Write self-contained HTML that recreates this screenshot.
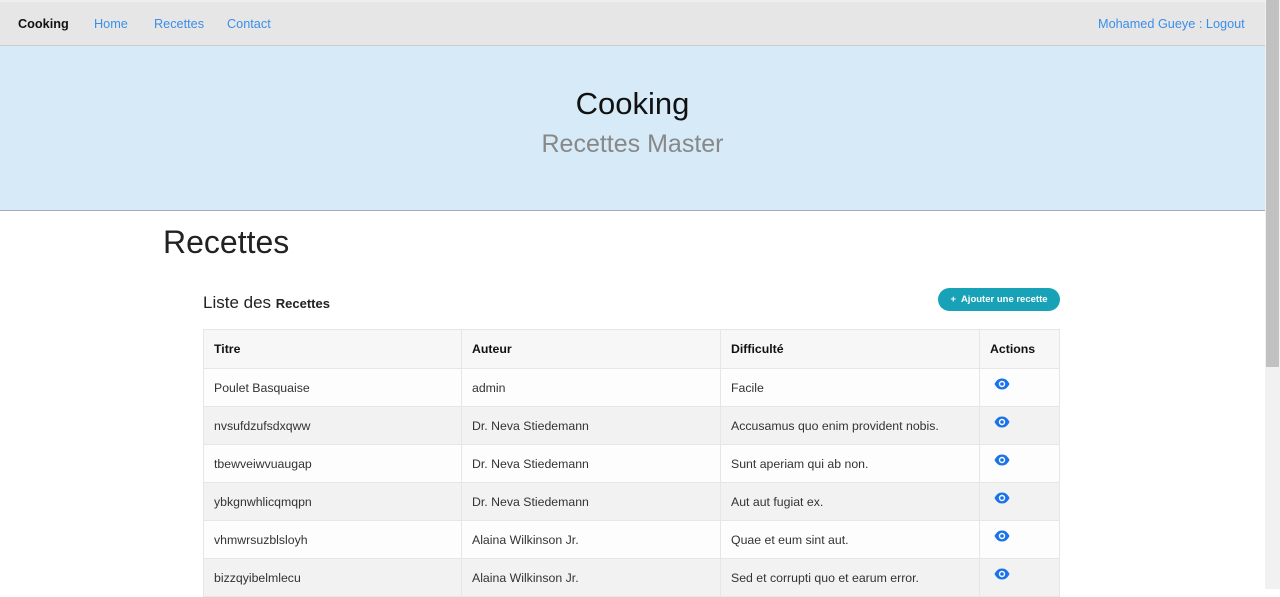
<!DOCTYPE html>
<html><head><meta charset="utf-8"><style>
*{box-sizing:border-box;margin:0;padding:0}
body{width:1280px;height:589px;overflow:hidden;font-family:"Liberation Sans",sans-serif;background:#fff;position:relative}
.nav{position:absolute;left:0;top:0;width:1265px;height:46px;background:#e6e6e6;border-top:2px solid #eee;border-bottom:1px solid #ccc;font-size:12.7px}
.nav span{position:absolute;top:15px;color:#3b8eea}
.hero{position:absolute;left:0;top:46px;width:1265px;height:165px;background:#d6eaf8;border-bottom:1px solid #aab;text-align:center}
.hero h1{font-weight:normal;font-size:31px;color:#111;margin-top:40px}
.hero h2{font-weight:normal;font-size:25px;color:#888;margin-top:8px}
.sb{position:absolute;left:1265px;top:0;width:15px;height:589px;background:#f1f1f1}
.sb div{position:absolute;left:1px;top:0;width:13px;height:367px;background:#c1c1c1}
table{position:absolute;left:203px;top:329px;width:857px;border-collapse:collapse;font-size:12.3px;color:#333}
td,th{border:1px solid #e6e6e6;height:38px;padding:0 10px;text-align:left}
th{background:#f7f7f7;color:#111;font-weight:bold;height:39px}
tr:nth-child(odd) td{background:#f2f2f2}
tr:nth-child(even) td{background:#fdfdfd}
.btn{position:absolute;left:938px;top:288px;width:122px;height:23px;border-radius:12px;background:#17a2b8;color:#fff;font-size:9.5px;font-weight:bold;line-height:23px;text-align:center}
</style></head><body>
<div class="nav"><span style="left:18px;color:#111;font-weight:bold">Cooking</span><span style="left:94px">Home</span><span style="left:154px">Recettes</span><span style="left:227px">Contact</span><span style="left:1098px">Mohamed Gueye : Logout</span></div>
<div class="hero"><h1>Cooking</h1><h2>Recettes Master</h2></div>
<div style="position:absolute;left:163px;top:224px;font-size:32px;color:#222">Recettes</div>
<div style="position:absolute;left:203px;top:293px;font-size:17px;color:#222">Liste des <b style="font-size:13px">Recettes</b></div>
<div class="btn">+&nbsp; Ajouter une recette</div>
<table>
<tr><th style="width:258px">Titre</th><th style="width:259px">Auteur</th><th style="width:259px">Difficulté</th><th>Actions</th></tr>
<tr><td>Poulet Basquaise</td><td>admin</td><td>Facile</td><td>E</td></tr>
<tr><td>nvsufdzufsdxqww</td><td>Dr. Neva Stiedemann</td><td>Accusamus quo enim provident nobis.</td><td>E</td></tr>
<tr><td>tbewveiwvuaugap</td><td>Dr. Neva Stiedemann</td><td>Sunt aperiam qui ab non.</td><td>E</td></tr>
<tr><td>ybkgnwhlicqmqpn</td><td>Dr. Neva Stiedemann</td><td>Aut aut fugiat ex.</td><td>E</td></tr>
<tr><td>vhmwrsuzblsloyh</td><td>Alaina Wilkinson Jr.</td><td>Quae et eum sint aut.</td><td>E</td></tr>
<tr><td>bizzqyibelmlecu</td><td>Alaina Wilkinson Jr.</td><td>Sed et corrupti quo et earum error.</td><td>E</td></tr>
</table>
<div class="sb"><div></div></div>
<script>
document.querySelectorAll('td').forEach(function(t){if(t.textContent==='E'){t.innerHTML='<svg width="16" height="12" viewBox="0 0 16 12" style="margin-left:4px;margin-top:-8px;vertical-align:middle"><path d="M0.5 6C2.5 2 5 0.5 8 0.5S13.5 2 15.5 6C13.5 10 11 11.5 8 11.5S2.5 10 0.5 6Z" fill="#1a73e8"/><circle cx="8" cy="6" r="3.2" fill="#fff"/><circle cx="8" cy="6" r="1.8" fill="#1a73e8"/></svg>'}});
</script>
</body></html>
